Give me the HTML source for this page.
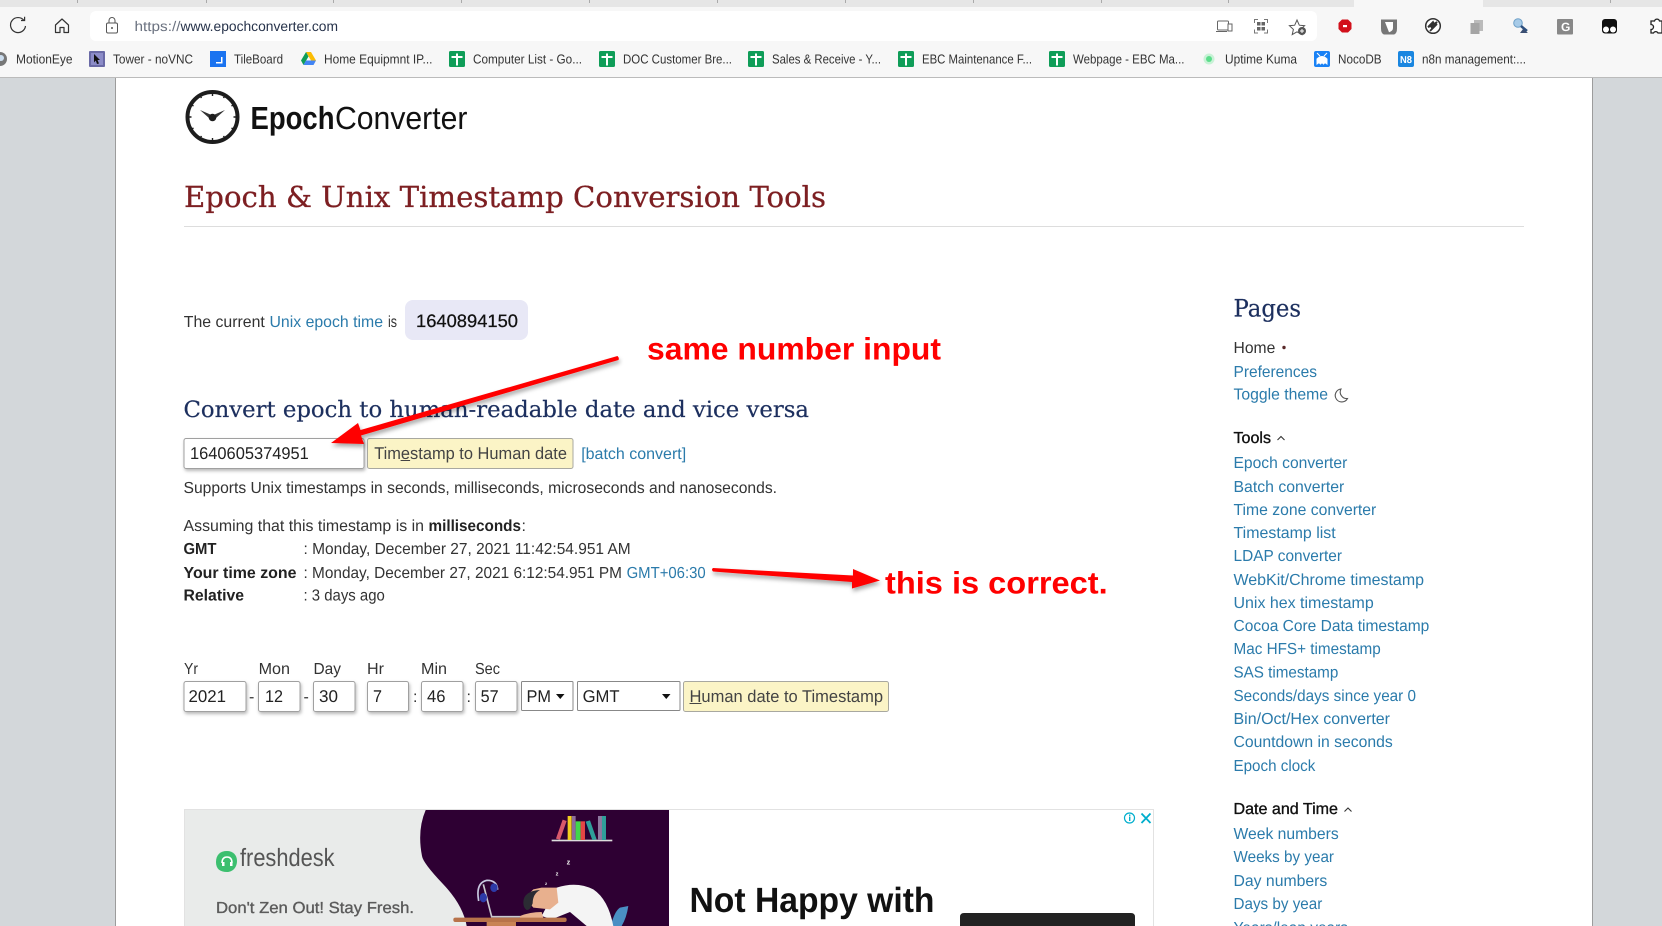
<!DOCTYPE html>
<html lang="en"><head><meta charset="utf-8"><title>Epoch Converter</title>
<style>
html,body{margin:0;padding:0;background:#fff;width:1662px;height:926px;overflow:hidden}
svg{display:block}
text{font-family:"Liberation Sans",sans-serif;text-rendering:geometricPrecision}
.b{font-size:13px;fill:#333}
.p{font-size:16px;fill:#333}
.a{font-size:16px;fill:#2b7bab}
.h{font-size:16px;fill:#222;font-weight:bold}
.s{font-family:"DejaVu Serif","Liberation Serif",serif}
.f{font-size:17px;fill:#222}
.r{font-size:31px;font-weight:bold;fill:#f00}
</style></head><body>
<svg xmlns="http://www.w3.org/2000/svg" width="1662" height="926" viewBox="0 0 1662 926">
<defs>
<filter id="sh" x="-20%" y="-30%" width="140%" height="170%"><feDropShadow dx="1" dy="2" stdDeviation="1.6" flood-color="#000" flood-opacity=".28"/></filter>
<filter id="as" x="-10%" y="-30%" width="120%" height="170%"><feDropShadow dx="1" dy="3" stdDeviation="2" flood-color="#000" flood-opacity=".35"/></filter>
<symbol id="gs" viewBox="0 0 16 16"><rect width="16" height="16" rx="1.5" fill="#0f9d58"/><path d="M7 2.500h2V5h4.500v2H9v7.500H7V7H2.500V5H7z" fill="#fff"/></symbol>
</defs>

<!-- browser chrome -->
<rect width="1662" height="78" fill="#f7f7f7"/>
<rect width="1662" height="7" fill="#e6e6e6"/>
<rect x="1354" y="0" width="129" height="7" fill="#f7f7f7"/>
<g fill="#aaa"><rect x="77" width="1" height="3"/><rect x="206" width="1" height="3"/><rect x="333" width="1" height="3"/><rect x="461" width="1" height="3"/><rect x="589" width="1" height="3"/><rect x="717" width="1" height="3"/><rect x="845" width="1" height="3"/><rect x="973" width="1" height="3"/><rect x="1101" width="1" height="3"/><rect x="1228" width="1" height="3"/><rect x="1610" width="1" height="3"/></g>
<rect y="77" width="1662" height="1" fill="#bbb"/>
<rect x="90" y="11" width="1227" height="30" rx="6" fill="#fff"/>

<path d="M24 20.500A7.500 7.500 0 1 0 25.500 26" fill="none" stroke="#333" stroke-width="1.200"/><path d="M21 20.500h3.600v-3.800" fill="none" stroke="#333" stroke-width="1.200"/>
<path d="M55.500 25L62 19l6.500 6v7.500h-4.500v-5h-4v5h-4.500z" fill="none" stroke="#333" stroke-width="1.200" stroke-linejoin="round"/>
<rect x="106.500" y="23" width="11" height="10" rx="1.500" fill="none" stroke="#555" stroke-width="1"/><path d="M109 23v-2.500a3 3 0 0 1 6 0V23" fill="none" stroke="#555"/><circle cx="112" cy="28" r="1" fill="#555"/>
<text x="134.500" y="31" font-size="14" fill="#6b7280" textLength="46" lengthAdjust="spacingAndGlyphs">https://</text>
<text x="180.500" y="31" font-size="14" fill="#26324a" textLength="157.500" lengthAdjust="spacingAndGlyphs">www.epochconverter.com</text>

<!-- toolbar right icons -->
<rect x="1217.500" y="21" width="11" height="9" rx="1" fill="none" stroke="#666"/><path d="M1216 31.500h11" stroke="#666"/><rect x="1228" y="24" width="4" height="7" fill="#fff" stroke="#666"/>
<g fill="none" stroke="#777"><path d="M1254.500 23v-3.500h3.500M1264 19.500h3.500V23M1267.500 29.500V33H1264M1258 33h-3.500v-3.500"/></g><g fill="#666"><rect x="1257" y="22" width="3.500" height="3.500"/><rect x="1261.500" y="22" width="3.500" height="3.500"/><rect x="1257" y="27" width="3.500" height="3.500"/><rect x="1261.500" y="27" width="3.500" height="3.500"/></g>
<path d="M1297 20l2.300 5.200 5.300.5-4 3.700 1.200 5.200-4.800-2.800-4.800 2.800 1.200-5.200-4-3.700 5.300-.5z" fill="#fff" stroke="#555"/><circle cx="1302" cy="31" r="4" fill="#555"/><path d="M1300 31h4M1302 29v4" stroke="#fff"/>
<path d="M1342 19.500h6l3.500 3.500v6l-3.500 3.500h-6l-3.500-3.500v-6z" fill="#d2101b"/><rect x="1343" y="25" width="4" height="2.200" fill="#fff"/>
<path d="M1381 19.500h16v9q0 5-3 6h-10q-3-1-3-6z" fill="#777"/><path d="M1385 22h8v6q0 3-4 4.300z" fill="#fff"/>
<circle cx="1433" cy="26" r="7.300" fill="#fff" stroke="#333" stroke-width="1.500"/><path d="M1428 27l5-5 1 2 3-2-5 6-1-2zM1430 31l7-7" stroke="#333" stroke-width="1.800" fill="#333"/>
<rect x="1474" y="20" width="9" height="11" fill="#bbb"/><rect x="1470.500" y="23" width="9" height="11" fill="#a5a5a5"/>
<circle cx="1518" cy="23" r="4.300" fill="#a7cbe8" stroke="#6ea0c8"/><path d="M1521 26l6 5" stroke="#2d4f7e" stroke-width="2.500"/><path d="M1520 33l3-4 5 4z" fill="#3b4f72"/>
<rect x="1557" y="19" width="16" height="15.500" rx="1" fill="#888"/><text x="1561" y="31" font-size="12" fill="#fff" font-weight="bold">G</text>
<rect x="1602" y="19" width="15" height="14.500" rx="3" fill="#111"/><circle cx="1606" cy="29.500" r="3" fill="#fff"/><circle cx="1613" cy="29.500" r="3" fill="#fff"/>
<path d="M1651 21h3.500a2.600 2.600 0 0 1 5 0h2.500v12h-4a2.500 2.500 0 0 0-4.500 0H1651v-3.500a2.500 2.500 0 0 0 0-5z" fill="#fff" stroke="#222" stroke-width="1.300"/>

<!-- bookmarks -->
<circle cx="0" cy="59" r="7" fill="#777"/><circle cx="1" cy="58" r="3" fill="#cde"/>
<text class="b" x="16" y="63.500" textLength="56.500" lengthAdjust="spacingAndGlyphs">MotionEye</text>
<rect x="89" y="51" width="16" height="16" rx="1" fill="#6a6aa6"/><rect x="91" y="53" width="12" height="12" fill="#8c8cc8"/><path d="M94 54l6 6h-2.500l1.500 3.500-2 .5-1.200-3.500-1.800 2z" fill="#111"/>
<text class="b" x="113" y="63.500" textLength="80" lengthAdjust="spacingAndGlyphs">Tower - noVNC</text>
<rect x="210" y="51" width="16" height="16" fill="#1a73f0"/><path d="M216 62h5v-5h1.500v6.500H216z" fill="#fff"/>
<text class="b" x="234" y="63.500" textLength="49" lengthAdjust="spacingAndGlyphs">TileBoard</text>
<path d="M306 52h5l5 8.500h-5z" fill="#fbbc04"/><path d="M306 52l-5 8.500 2.500 4.500 5-8.500z" fill="#0f9d58"/><path d="M303.500 65h10l2.500-4.500h-10z" fill="#4285f4"/>
<text class="b" x="324" y="63.500" textLength="108.500" lengthAdjust="spacingAndGlyphs">Home Equipmnt IP...</text>
<use href="#gs" x="449" y="51" width="16" height="16"/>
<text class="b" x="473" y="63.500" textLength="109" lengthAdjust="spacingAndGlyphs">Computer List - Go...</text>
<use href="#gs" x="599" y="51" width="16" height="16"/>
<text class="b" x="623" y="63.500" textLength="109" lengthAdjust="spacingAndGlyphs">DOC Customer Bre...</text>
<use href="#gs" x="748" y="51" width="16" height="16"/>
<text class="b" x="772" y="63.500" textLength="109" lengthAdjust="spacingAndGlyphs">Sales &amp; Receive - Y...</text>
<use href="#gs" x="898" y="51" width="16" height="16"/>
<text class="b" x="922" y="63.500" textLength="110" lengthAdjust="spacingAndGlyphs">EBC Maintenance F...</text>
<use href="#gs" x="1049" y="51" width="16" height="16"/>
<text class="b" x="1073" y="63.500" textLength="111.500" lengthAdjust="spacingAndGlyphs">Webpage - EBC Ma...</text>
<circle cx="1209" cy="59" r="5.500" fill="#c8f2d6"/><circle cx="1209" cy="59" r="3" fill="#5cdd8b"/>
<text class="b" x="1225" y="63.500" textLength="72" lengthAdjust="spacingAndGlyphs">Uptime Kuma</text>
<rect x="1314" y="51" width="16" height="16" rx="2" fill="#1a82f5"/><path d="M1317 59q5-5 10 0v5l-2-1.500-1.500 1.500-1.500-1.500-1.500 1.500-1.500-1.500-2 1.500zM1317 53l3 3M1327 53l-3 3" fill="#fff" stroke="#fff"/>
<text class="b" x="1338" y="63.500" textLength="43.600" lengthAdjust="spacingAndGlyphs">NocoDB</text>
<rect x="1398" y="51" width="16" height="16" rx="2" fill="#1a86e0"/><text x="1400" y="63" font-size="10" font-weight="bold" fill="#fff" textLength="12" lengthAdjust="spacingAndGlyphs">N8</text>
<text class="b" x="1422" y="63.500" textLength="104" lengthAdjust="spacingAndGlyphs">n8n management:...</text>

<!-- page background -->
<rect y="78" width="115" height="848" fill="#d3d7da"/>
<rect x="115" y="78" width="1" height="848" fill="#9c9c9c"/>
<rect x="1592" y="78" width="1" height="848" fill="#9c9c9c"/>
<rect x="1593" y="78" width="69" height="848" fill="#d3d7da"/>

<!-- logo -->
<circle cx="212.500" cy="117" r="25" fill="none" stroke="#1d1d1d" stroke-width="4"/>
<g stroke="#1d1d1d" stroke-width="1.400"><path d="M212.500 92v4M212.500 138v4M187.500 117h4M233.500 117h4M200 95.500l1.500 2.500M225 95.500l-1.500 2.500M200 138.500l1.500-2.500M225 138.500l-1.500-2.500M191 104.500l2.500 1.500M234 104.500l-2.500 1.500M191 129.500l2.500-1.500M234 129.500l-2.500-1.500"/></g>
<path d="M200 110l11.500 5-2.500 3zM225 110l-11.500 5 2.500 3z" fill="#333"/><circle cx="212.500" cy="117.500" r="3.800" fill="#1d1d1d"/>
<text x="250.500" y="129" font-size="32" font-weight="bold" fill="#111" textLength="84" lengthAdjust="spacingAndGlyphs">Epoch</text>
<text x="335" y="129" font-size="32" fill="#111" textLength="132.400" lengthAdjust="spacingAndGlyphs">Converter</text>

<!-- heading -->
<text class="s" x="184" y="207" font-size="29" fill="#7d1f22" stroke="#7d1f22" stroke-width=".3" textLength="642" lengthAdjust="spacingAndGlyphs">Epoch &amp; Unix Timestamp Conversion Tools</text>
<rect x="184" y="226" width="1340" height="1" fill="#ddd"/>

<!-- current epoch -->
<text class="p" x="183.800" y="327" textLength="81" lengthAdjust="spacingAndGlyphs">The current</text>
<text class="a" x="269.500" y="327" textLength="113.500" lengthAdjust="spacingAndGlyphs">Unix epoch time</text>
<text class="p" x="388" y="327" textLength="9" lengthAdjust="spacingAndGlyphs">is</text>
<rect x="405" y="300" width="123" height="40" rx="8" fill="#e8e8f6"/>
<text x="416" y="327" font-size="18" fill="#111" stroke="#111" stroke-width=".25" textLength="102" lengthAdjust="spacingAndGlyphs">1640894150</text>

<text class="s" x="183.500" y="417" font-size="22.500" fill="#1c2f5e" stroke="#1c2f5e" stroke-width=".2" textLength="625.500" lengthAdjust="spacingAndGlyphs">Convert epoch to human-readable date and vice versa</text>

<!-- first form -->
<rect x="184" y="438.500" width="180" height="30" rx="2" fill="#fff" stroke="#a0a0a0" filter="url(#sh)"/>
<text class="f" x="190" y="459" textLength="118.800" lengthAdjust="spacingAndGlyphs">1640605374951</text>
<rect x="367.500" y="438.500" width="205.500" height="30" rx="2" fill="#fbf4c6" stroke="#a8a8a0"/>
<text class="f" x="374.200" y="459" style="fill:#444" textLength="192.800" lengthAdjust="spacingAndGlyphs">Timestamp to Human date</text>
<rect x="400.600" y="460" width="9.500" height="1" fill="#444"/>
<text class="a" x="581.200" y="459" textLength="105" lengthAdjust="spacingAndGlyphs">[batch convert]</text>
<text class="p" x="183.500" y="493" textLength="593.500" lengthAdjust="spacingAndGlyphs">Supports Unix timestamps in seconds, milliseconds, microseconds and nanoseconds.</text>

<text class="p" x="183.500" y="531" textLength="240.500" lengthAdjust="spacingAndGlyphs">Assuming that this timestamp is in</text>
<text class="h" x="428.500" y="531" textLength="92.500" lengthAdjust="spacingAndGlyphs">milliseconds</text>
<text class="p" x="521.500" y="531">:</text>
<text class="h" x="183.500" y="554" textLength="33" lengthAdjust="spacingAndGlyphs">GMT</text>
<text class="p" x="303.500" y="554" textLength="327.200" lengthAdjust="spacingAndGlyphs">: Monday, December 27, 2021 11:42:54.951 AM</text>
<text class="h" x="183.500" y="578" textLength="113" lengthAdjust="spacingAndGlyphs">Your time zone</text>
<text class="p" x="303.500" y="578" textLength="318.500" lengthAdjust="spacingAndGlyphs">: Monday, December 27, 2021 6:12:54.951 PM</text>
<text class="a" x="626.600" y="578" textLength="79.100" lengthAdjust="spacingAndGlyphs">GMT+06:30</text>
<text class="h" x="183.500" y="600.500" textLength="60.500" lengthAdjust="spacingAndGlyphs">Relative</text>
<text class="p" x="303.500" y="600.500" textLength="81.300" lengthAdjust="spacingAndGlyphs">: 3 days ago</text>

<!-- annotations -->
<text class="r" x="647" y="359.500" textLength="294" lengthAdjust="spacingAndGlyphs">same number input</text>
<path d="M617.500 356q2 2 1 4L361 435.500l3 8.500-33-1 27-20 2.500 7z" fill="#f00" filter="url(#as)"/>
<text class="r" x="885" y="593.500" textLength="222.700" lengthAdjust="spacingAndGlyphs">this is correct.</text>
<path d="M713 568l140 7.500v-6.500L880 580.500 852 588.500v-6.500l-139-10.500q-2-2 0-3.500z" fill="#f00" filter="url(#as)"/>

<!-- second form -->
<text class="p" x="184" y="674" textLength="14" lengthAdjust="spacingAndGlyphs">Yr</text>
<text class="p" x="258.600" y="674" textLength="31.400" lengthAdjust="spacingAndGlyphs">Mon</text>
<text class="p" x="313.500" y="674" textLength="27.500" lengthAdjust="spacingAndGlyphs">Day</text>
<text class="p" x="367" y="674" textLength="17" lengthAdjust="spacingAndGlyphs">Hr</text>
<text class="p" x="421" y="674" textLength="26" lengthAdjust="spacingAndGlyphs">Min</text>
<text class="p" x="475" y="674" textLength="25" lengthAdjust="spacingAndGlyphs">Sec</text>
<g fill="#fff" stroke="#a0a0a0">
<rect x="184" y="681.500" width="62" height="30" rx="2" filter="url(#sh)"/>
<rect x="258.500" y="681.500" width="41.500" height="30" rx="2" filter="url(#sh)"/>
<rect x="313.500" y="681.500" width="41.500" height="30" rx="2" filter="url(#sh)"/>
<rect x="367.500" y="681.500" width="41" height="30" rx="2" filter="url(#sh)"/>
<rect x="421.500" y="681.500" width="41.500" height="30" rx="2" filter="url(#sh)"/>
<rect x="475.500" y="681.500" width="41.500" height="30" rx="2" filter="url(#sh)"/>
<rect x="521.500" y="681.500" width="51.500" height="29" rx="1" stroke="#888"/>
<rect x="577.500" y="681.500" width="102.500" height="29" rx="1" stroke="#888"/>
</g>
<text class="f" x="188.500" y="702" textLength="37.500" lengthAdjust="spacingAndGlyphs">2021</text>
<text class="f" x="265" y="702" textLength="18" lengthAdjust="spacingAndGlyphs">12</text>
<text class="f" x="319" y="702" textLength="19" lengthAdjust="spacingAndGlyphs">30</text>
<text class="f" x="373" y="702" textLength="9" lengthAdjust="spacingAndGlyphs">7</text>
<text class="f" x="427" y="702" textLength="18.500" lengthAdjust="spacingAndGlyphs">46</text>
<text class="f" x="480.600" y="702" textLength="18" lengthAdjust="spacingAndGlyphs">57</text>
<text class="f" x="526.500" y="702" textLength="24.500" lengthAdjust="spacingAndGlyphs">PM</text>
<text class="f" x="582.600" y="702" textLength="37" lengthAdjust="spacingAndGlyphs">GMT</text>
<path d="M556 694h8.500l-4.250 5zM662 694h8.500l-4.250 5z" fill="#111"/>
<text class="p" x="249" y="702">-</text><text class="p" x="303.500" y="702">-</text><text class="p" x="413" y="702">:</text><text class="p" x="466.500" y="702">:</text>
<rect x="683.500" y="681.500" width="205" height="30" rx="2" fill="#fbf4c6" stroke="#a8a8a0"/>
<text class="f" x="689.500" y="702" style="fill:#444" textLength="193.500" lengthAdjust="spacingAndGlyphs">Human date to Timestamp</text>
<rect x="689.500" y="703" width="12" height="1" fill="#444"/>

<!-- ad -->
<rect x="184.500" y="809.500" width="969" height="130" fill="#fff" stroke="#e2e2e2"/>
<rect x="185" y="810" width="484" height="116" fill="#e9ebea"/>
<path d="M425.700 810H669v116H466.700Q463 905 443 884T422 856Q417 830 425.700 810z" fill="#2e0033"/>
<g transform="translate(420 806) scale(.3333)">
<rect x="395" y="101" width="182" height="5" fill="#ddd"/>
<path d="M408 98l20-57 12 4-20 56z" fill="#d9596b"/>
<rect x="443" y="30" width="12" height="72" fill="#f2cf1f"/><rect x="456" y="30" width="11" height="72" fill="#8d6c9c"/><rect x="467" y="46" width="15" height="56" fill="#42d64a"/><rect x="482" y="46" width="13" height="56" fill="#e64545"/>
<path d="M497 47l13-4 20 57-13 2z" fill="#2f9e9a"/><rect x="534" y="30" width="12" height="72" fill="#8d7aa0"/><rect x="546" y="30" width="12" height="72" fill="#2f9e9a"/>
<text x="440" y="176" font-size="22" font-weight="bold" fill="#eee">z</text><text x="407" y="208" font-size="17" font-weight="bold" fill="#eee">z</text><text x="375" y="237" font-size="13" font-weight="bold" fill="#eee">z</text>
<path d="M190 235l25 97h85" fill="none" stroke="#c9c9cf" stroke-width="5"/>
<path d="M176 285q-10-55 25-62 30 0 32 28" fill="none" stroke="#c8c8e0" stroke-width="5"/><ellipse cx="190" cy="275" rx="11" ry="14" fill="#2d3aa8"/><ellipse cx="222" cy="245" rx="11" ry="13" fill="#2d3aa8"/>
<path d="M572 360q12-45 28-55l25-5q-5 35-20 60z" fill="#4a8fc4"/>
<path d="M365 330l45-85q60-20 110 5 45 30 60 110h-80l-50-42-55 22z" fill="#f4f4f4"/>
<path d="M300 330q30-12 65-12l5 18-70 2zM340 250l25-5 45 0 5 45-25 20-50-5-25-30z" fill="#e8b08e"/>
<path d="M310 290q0-35 50-38-22 12-22 40-8 22-18 20-10-6-10-22z" fill="#2b2b33"/>
<rect x="100" y="335" width="340" height="13" rx="6" fill="#b8734a"/><rect x="200" y="348" width="88" height="12" fill="#c98455"/>
</g>
<path d="M227 851c6 0 10 4 10 10s-4 11-10 11c-7 0-11-3-11-10s4-11 11-11z" fill="#3cbf6f"/><path d="M222 863q0-6 5-6t5 6" fill="none" stroke="#fff" stroke-width="1.500"/><rect x="222" y="862" width="2.500" height="4" fill="#fff"/><rect x="230" y="862" width="2.500" height="4" fill="#fff"/>
<text x="240" y="866" font-size="25" fill="#555" textLength="94.500" lengthAdjust="spacingAndGlyphs">freshdesk</text>
<text x="216" y="913" font-size="16" fill="#5b5b5b" stroke="#5b5b5b" stroke-width=".35" textLength="198" lengthAdjust="spacingAndGlyphs">Don't Zen Out! Stay Fresh.</text>
<text x="689.500" y="912" font-size="35" font-weight="bold" fill="#111" textLength="245" lengthAdjust="spacingAndGlyphs">Not Happy with</text>
<path d="M960 926v-9q0-4 4-4h167q4 0 4 4v9z" fill="#222"/>
<circle cx="1129.500" cy="818" r="5" fill="none" stroke="#00aecd" stroke-width="1.200"/><rect x="1129" y="816.500" width="1.400" height="4.500" fill="#00aecd"/><rect x="1129" y="814.500" width="1.400" height="1.400" fill="#00aecd"/>
<path d="M1141.500 813.500l9 9.500M1150.500 813.500l-9 9.500" stroke="#00aecd" stroke-width="1.800"/>

<!-- sidebar -->
<text class="s" x="1233.500" y="316.500" font-size="24" fill="#1c2f5e" stroke="#1c2f5e" stroke-width=".2" textLength="67.500" lengthAdjust="spacingAndGlyphs">Pages</text>
<text class="p" x="1233.500" y="352.800" textLength="41.800" lengthAdjust="spacingAndGlyphs">Home</text>
<circle cx="1284" cy="347.500" r="1.700" fill="#5a2a2a"/>
<text class="a" x="1233.500" y="376.800" textLength="83.500" lengthAdjust="spacingAndGlyphs">Preferences</text>
<text class="a" x="1233.500" y="399.500" textLength="94.500" lengthAdjust="spacingAndGlyphs">Toggle theme</text>
<path d="M1341 389a6.500 6.500 0 1 0 6.500 9.500 6.500 6.500 0 0 1-6.500-9.500z" fill="none" stroke="#555" stroke-width="1.100"/>
<text class="p" x="1233.500" y="442.800" style="fill:#111;stroke:#111;stroke-width:.35" textLength="37.500" lengthAdjust="spacingAndGlyphs">Tools</text>
<path d="M1277.500 440l3.500-3.500 3.500 3.500" fill="none" stroke="#333" stroke-width="1.100"/>
<text class="a" x="1233.500" y="468" textLength="113.800" lengthAdjust="spacingAndGlyphs">Epoch converter</text>
<text class="a" x="1233.500" y="492" textLength="110.800" lengthAdjust="spacingAndGlyphs">Batch converter</text>
<text class="a" x="1233.500" y="515" textLength="142.800" lengthAdjust="spacingAndGlyphs">Time zone converter</text>
<text class="a" x="1233.500" y="538" textLength="102.200" lengthAdjust="spacingAndGlyphs">Timestamp list</text>
<text class="a" x="1233.500" y="561" textLength="108.500" lengthAdjust="spacingAndGlyphs">LDAP converter</text>
<text class="a" x="1233.500" y="585" textLength="190.500" lengthAdjust="spacingAndGlyphs">WebKit/Chrome timestamp</text>
<text class="a" x="1233.500" y="608" textLength="140.200" lengthAdjust="spacingAndGlyphs">Unix hex timestamp</text>
<text class="a" x="1233.500" y="631" textLength="195.800" lengthAdjust="spacingAndGlyphs">Cocoa Core Data timestamp</text>
<text class="a" x="1233.500" y="654" textLength="147.200" lengthAdjust="spacingAndGlyphs">Mac HFS+ timestamp</text>
<text class="a" x="1233.500" y="677.500" textLength="104.800" lengthAdjust="spacingAndGlyphs">SAS timestamp</text>
<text class="a" x="1233.500" y="701" textLength="182.500" lengthAdjust="spacingAndGlyphs">Seconds/days since year 0</text>
<text class="a" x="1233.500" y="724" textLength="156.500" lengthAdjust="spacingAndGlyphs">Bin/Oct/Hex converter</text>
<text class="a" x="1233.500" y="747" textLength="159.200" lengthAdjust="spacingAndGlyphs">Countdown in seconds</text>
<text class="a" x="1233.500" y="771" textLength="81.800" lengthAdjust="spacingAndGlyphs">Epoch clock</text>
<text class="p" x="1233.500" y="814" style="fill:#111;stroke:#111;stroke-width:.35" textLength="104.500" lengthAdjust="spacingAndGlyphs">Date and Time</text>
<path d="M1344.500 811.500l3.500-3.500 3.500 3.500" fill="none" stroke="#333" stroke-width="1.100"/>
<text class="a" x="1233.500" y="839" textLength="105.200" lengthAdjust="spacingAndGlyphs">Week numbers</text>
<text class="a" x="1233.500" y="862" textLength="100.500" lengthAdjust="spacingAndGlyphs">Weeks by year</text>
<text class="a" x="1233.500" y="886" textLength="93.800" lengthAdjust="spacingAndGlyphs">Day numbers</text>
<text class="a" x="1233.500" y="909" textLength="88.800" lengthAdjust="spacingAndGlyphs">Days by year</text>
<text class="a" x="1233.500" y="933" textLength="114.500" lengthAdjust="spacingAndGlyphs">Years/leap years</text>
</svg>
</body></html>
